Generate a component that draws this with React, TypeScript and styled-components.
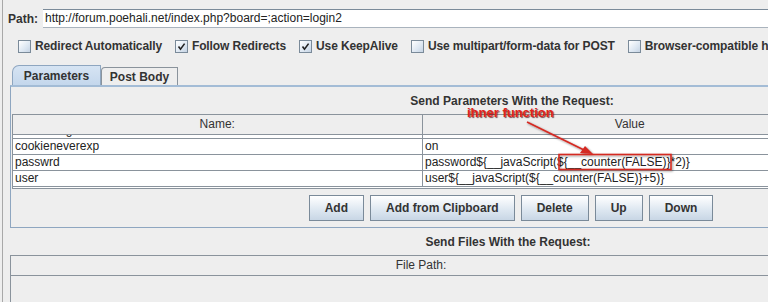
import styled, { createGlobalStyle } from "styled-components";

const GlobalStyle = createGlobalStyle`
  html, body {
    margin: 0;
    padding: 0;
    background: #eeeeee;
    overflow: hidden;
  }
  body {
    font-family: "Liberation Sans", Arial, sans-serif;
    font-size: 12px;
    color: #333333;
  }
`;

const options = [
  { label: "Redirect Automatically", checked: false },
  { label: "Follow Redirects", checked: true },
  { label: "Use KeepAlive", checked: true },
  { label: "Use multipart/form-data for POST", checked: false },
  { label: "Browser-compatible headers", checked: false },
];

const params = [
  { name: "cookielength", value: "" },
  { name: "cookieneverexp", value: "on" },
  { name: "passwrd", value: "password${__javaScript(${__counter(FALSE)}*2)}" },
  { name: "user", value: "user${__javaScript(${__counter(FALSE)}+5)}" },
];

const buttons = ["Add", "Add from Clipboard", "Delete", "Up", "Down"];

const Check = () => (
  <svg width="11" height="11" viewBox="0 0 11 11">
    <path d="M2.5 5.5 L4.5 8.2 L8.6 2.6" fill="none" stroke="#222" strokeWidth="1.6" />
  </svg>
);

const App = () => {
  return (
    <Root>
      <GlobalStyle />
      <Frame>
        <PathRow>
          <PathLabel>Path:</PathLabel>
          <PathField>http://forum.poehali.net/index.php?board=;action=login2</PathField>
        </PathRow>

        <OptionsRow>
          {options.map((o) => (
            <Option key={o.label}>
              <Box>{o.checked && <Check />}</Box>
              {o.label}
            </Option>
          ))}
        </OptionsRow>

        <TabStrip>
          <Tab active>Parameters</Tab>
          <Tab>Post Body</Tab>
        </TabStrip>

        <Panel>
          <Title>Send Parameters With the Request:</Title>
          <Table width={824}>
            <HeaderRow>
              <HeaderCell w={409}>Name:</HeaderCell>
              <HeaderCell w={415}>Value</HeaderCell>
            </HeaderRow>
            <Body>
              <Scrolled>
                {params.map((p) => (
                  <Row key={p.name}>
                    <Cell w={409}>{p.name}</Cell>
                    <Cell w={415}>{p.value}</Cell>
                  </Row>
                ))}
              </Scrolled>
            </Body>
          </Table>
          <ButtonRow>
            {buttons.map((b) => (
              <Button key={b}>{b}</Button>
            ))}
          </ButtonRow>
        </Panel>

        <Title>Send Files With the Request:</Title>
        <FileTable>
          <HeaderRow>
            <HeaderCell w={820}>File Path:</HeaderCell>
          </HeaderRow>
        </FileTable>
      </Frame>

      <Note>ihner function</Note>
      <Overlay width="768" height="302" viewBox="0 0 768 302">
        <defs>
          <filter id="sh" x="-20%" y="-20%" width="140%" height="140%">
            <feDropShadow dx="1" dy="1" stdDeviation="0.8" floodColor="#000" floodOpacity="0.45" />
          </filter>
        </defs>
        <g filter="url(#sh)">
          <line x1="527" y1="122" x2="584" y2="150" stroke="#d42a24" strokeWidth="1.8" />
          <polygon points="593,154 580,153 585,146" fill="#d42a24" />
          <rect x="559" y="154.5" width="112" height="15" fill="none" stroke="#d42a24" strokeWidth="1.6" />
        </g>
      </Overlay>
    </Root>
  );
};

export default App;

const Root = styled.div`
  position: relative;
  width: 1012px;
  height: 302px;
  overflow: hidden;
`;

const Frame = styled.div`
  margin-left: 2px;
  width: 1008px;
  height: 302px;
  border-left: 1px solid #a8a8a8;
  display: flex;
  flex-direction: column;
`;

const PathRow = styled.div`
  display: flex;
  align-items: center;
  padding: 9px 0 0 5px;
`;

const PathLabel = styled.span`
  font-weight: bold;
  width: 35px;
`;

const PathField = styled.div`
  flex: 1;
  height: 17px;
  line-height: 17px;
  background: #ffffff;
  border-top: 1px solid #7a8a99;
  border-bottom: 1px solid #a9b3bd;
  padding-left: 2px;
  color: #222;
`;

const OptionsRow = styled.div`
  display: flex;
  align-items: center;
  gap: 13px;
  padding: 11px 0 0 15px;
  white-space: nowrap;
`;

const Option = styled.label`
  display: flex;
  align-items: center;
  gap: 4px;
  font-weight: bold;
  letter-spacing: -0.12px;
`;

const Box = styled.span`
  width: 11px;
  height: 11px;
  border: 1px solid #7a8a99;
  background: linear-gradient(135deg, #ffffff 0%, #dde7f2 60%, #c5d3e3 100%);
  display: flex;
`;

const TabStrip = styled.div`
  display: flex;
  align-items: flex-end;
  margin: 12px 0 0 9px;
  height: 20px;
`;

const Tab = styled.div<{ active?: boolean }>`
  height: ${(p) => (p.active ? "20px" : "18px")};
  line-height: ${(p) => (p.active ? "20px" : "18px")};
  box-sizing: border-box;
  width: ${(p) => (p.active ? "89px" : "77px")};
  font-weight: bold;
  text-align: center;
  border: 1px solid ${(p) => (p.active ? "#8ea6c0" : "#8a939c")};
  border-bottom: none;
  border-top-left-radius: ${(p) => (p.active ? "7px" : "4px")};
  background: ${(p) => (p.active ? "linear-gradient(#d6e4f3, #c4d7ec)" : "#eeeeee")};
`;

const Panel = styled.div`
  margin-left: 7px;
  height: 140px;
  border: 1px solid #8ea6c0;
  border-top: 2px solid #a3bcd6;
  border-right: none;
  display: flex;
  flex-direction: column;
  align-items: stretch;
`;

const Title = styled.div`
  text-align: center;
  font-weight: bold;
  line-height: 14px;
  padding: 7px 0 6px 2px;
`;

const Table = styled.div<{ width: number }>`
  width: ${(p) => p.width}px;
  margin-left: 1px;
  background: #ffffff;
  border-left: 1px solid #8a939c;
`;

const HeaderRow = styled.div`
  display: flex;
  height: 19px;
  border-top: 1px solid #8a939c;
  border-bottom: 1px solid #8a939c;
  background: #eeeeee;
`;

const HeaderCell = styled.div<{ w: number }>`
  width: ${(p) => p.w}px;
  text-align: center;
  line-height: 19px;
  color: #333;
  & + & {
    border-left: 1px solid #8a939c;
  }
`;

const Body = styled.div`
  height: 53px;
  overflow: hidden;
  border-bottom: 1px solid #8a939c;
`;

const Scrolled = styled.div`
  margin-top: -12px;
`;

const Row = styled.div`
  display: flex;
  height: 15px;
  border-bottom: 1px solid #8a939c;
`;

const Cell = styled.div<{ w: number }>`
  width: ${(p) => p.w}px;
  box-sizing: border-box;
  padding-left: 2px;
  line-height: 15px;
  color: #222;
  white-space: nowrap;
  overflow: hidden;
  & + & {
    border-left: 1px solid #8a939c;
  }
`;

const ButtonRow = styled.div`
  display: flex;
  justify-content: center;
  gap: 6px;
  margin-top: 6px;
`;

const Button = styled.button`
  height: 26px;
  padding: 0 15px;
  font-family: "Liberation Sans", Arial, sans-serif;
  font-size: 12px;
  font-weight: bold;
  color: #333;
  border: 1px solid #7a8a99;
  background: linear-gradient(#ffffff, #dce6f0 60%, #c8d6e5);
`;

const FileTable = styled.div`
  margin-left: 7px;
  width: 820px;
  flex: 1;
  border-left: 1px solid #8a939c;
`;

const Note = styled.div`
  position: absolute;
  left: 467px;
  top: 105px;
  font-weight: bold;
  font-size: 13px;
  color: #e2231a;
  text-shadow: 1px 1px 1px rgba(60, 0, 0, 0.7);
`;

const Overlay = styled.svg`
  position: absolute;
  left: 0;
  top: 0;
  pointer-events: none;
`;
